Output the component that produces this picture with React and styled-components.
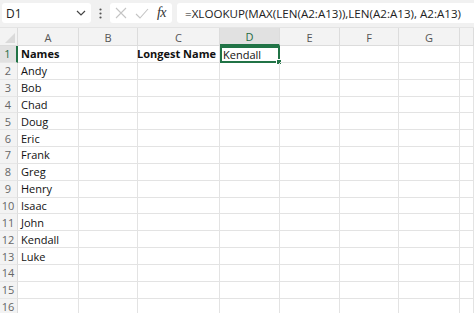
import React from 'react'
import styled, { createGlobalStyle } from 'styled-components'

const GlobalStyle = createGlobalStyle`
  html, body {
    margin: 0;
    padding: 0;
    background: #fff;
    overflow: hidden;
  }
  body {
    font-family: "Open Sans", "Noto Sans", sans-serif;
  }
`

const COLS = [
  { key: 'A', width: 61 },
  { key: 'B', width: 59 },
  { key: 'C', width: 82 },
  { key: 'D', width: 60 },
  { key: 'E', width: 60 },
  { key: 'F', width: 59 },
  { key: 'G', width: 61 },
  { key: 'H', width: 0, hidden: true },
]

const names = ['Andy', 'Bob', 'Chad', 'Doug', 'Eric', 'Frank', 'Greg', 'Henry', 'Isaac', 'John', 'Kendall', 'Luke']

const cellText = (row, col) => {
  if (row === 1 && col === 'A') return { text: 'Names', bold: true }
  if (row === 1 && col === 'C') return { text: 'Longest Name', bold: true, right: true }
  if (row === 1 && col === 'D') return { text: 'Kendall' }
  if (col === 'A' && row >= 2 && row <= 13) return { text: names[row - 2] }
  return null
}

const Page = styled.div`
  width: 474px;
  height: 313px;
  overflow: hidden;
  display: flex;
  flex-direction: column;
`

const TopBar = styled.div`
  height: 28px;
  background: #f1f1f1;
  display: flex;
  align-items: flex-start;
  padding-top: 3px;
  box-sizing: border-box;
  border-bottom: 1px solid #e4e4e4;
  flex-shrink: 0;
`

const NameBox = styled.div`
  width: 89px;
  height: 20px;
  margin-left: 2px;
  background: #fff;
  border-radius: 3px;
  display: flex;
  align-items: center;
  justify-content: space-between;
  padding: 0 5px 0 4px;
  box-sizing: border-box;
  font-size: 12px;
  color: #222;
`

const Dots = styled.div`
  width: 19px;
  display: flex;
  justify-content: center;
  align-items: center;
  height: 20px;
`

const FxGroup = styled.div`
  width: 62px;
  height: 20px;
  background: #fff;
  border-radius: 3px;
  display: flex;
  align-items: center;
  justify-content: space-between;
  padding: 0 6px 0 5px;
  box-sizing: border-box;
`

const Fx = styled.span`
  font-family: "Liberation Serif", "DejaVu Serif", serif;
  font-style: italic;
  font-size: 14px;
  color: #333;
  letter-spacing: -0.5px;
`

const FormulaBox = styled.div`
  flex: 1;
  height: 20px;
  margin-left: 5px;
  background: #fff;
  border-radius: 3px 0 0 3px;
  display: flex;
  align-items: center;
  padding-left: 8px;
  font-size: 11.6px;
  color: #222;
  white-space: nowrap;
  overflow: hidden;
`

const Sheet = styled.div`
  display: grid;
  grid-template-columns: 18px ${COLS.map(c => (c.width ? `${c.width}px` : '1fr')).join(' ')};
  grid-template-rows: 18px repeat(16, 16.85px);
  flex: 1;
`

const Corner = styled.div`
  background: #f3f3f3;
  border-right: 1px solid #dcdcdc;
  border-bottom: 1px solid #dcdcdc;
  box-sizing: border-box;
  position: relative;
  &::after {
    content: '';
    position: absolute;
    right: 2px;
    bottom: 2px;
    width: 0;
    height: 0;
    border-left: 10px solid transparent;
    border-bottom: 10px solid #dadada;
  }
`

const ColHead = styled.div`
  background: ${({ active }) => (active ? '#e1e1e1' : '#f3f3f3')};
  color: ${({ active }) => (active ? '#1f6b43' : '#555')};
  border-right: 1px solid #dcdcdc;
  border-bottom: ${({ active }) => (active ? '2px solid #217346' : '1px solid #dcdcdc')};
  box-sizing: border-box;
  font-size: 11px;
  display: flex;
  align-items: center;
  justify-content: center;
  padding-top: 1px;
`

const RowHead = styled.div`
  background: ${({ active }) => (active ? '#e1e1e1' : '#f3f3f3')};
  color: ${({ active }) => (active ? '#1f6b43' : '#666')};
  border-right: ${({ active }) => (active ? '2px solid #217346' : '1px solid #dcdcdc')};
  border-bottom: 1px solid #e6e6e6;
  box-sizing: border-box;
  font-size: 11px;
  display: flex;
  align-items: center;
  justify-content: center;
  padding-right: 1px;
`

const Cell = styled.div`
  border-right: 1px solid #e3e3e3;
  border-bottom: 1px solid #e3e3e3;
  box-sizing: border-box;
  font-size: 11px;
  font-weight: ${({ bold }) => (bold ? 700 : 400)};
  color: #111;
  display: flex;
  align-items: center;
  justify-content: ${({ right }) => (right ? 'flex-end' : 'flex-start')};
  padding: 0 3px;
  white-space: nowrap;
  position: relative;
  ${({ selected }) => selected && `
    border: 2px solid #217346;
    padding: 0 2px 0 1px;
    &::after {
      content: '';
      position: absolute;
      right: -4px;
      bottom: -4px;
      width: 4px;
      height: 4px;
      background: #217346;
      border: 1px solid #fff;
    }
  `}
`

const Chevron = () => (
  <svg width="10" height="6" viewBox="0 0 10 6">
    <path d="M1 1l4 4 4-4" fill="none" stroke="#444" strokeWidth="1.2" />
  </svg>
)

const VDots = () => (
  <svg width="3" height="11" viewBox="0 0 3 11">
    <circle cx="1.5" cy="1.5" r="1.1" fill="#555" />
    <circle cx="1.5" cy="5.5" r="1.1" fill="#555" />
    <circle cx="1.5" cy="9.5" r="1.1" fill="#555" />
  </svg>
)

const Cross = () => (
  <svg width="12" height="12" viewBox="0 0 12 12">
    <path d="M1 1l10 10M11 1L1 11" stroke="#c4c4c4" strokeWidth="1.1" />
  </svg>
)

const Tick = () => (
  <svg width="14" height="11" viewBox="0 0 14 11">
    <path d="M1 6l4 4 8-9" fill="none" stroke="#c4c4c4" strokeWidth="1.1" />
  </svg>
)

export default function App () {
  const rows = Array.from({ length: 16 }, (_, i) => i + 1)
  return (
    <Page>
      <GlobalStyle />
      <TopBar>
        <NameBox>
          <span>D1</span>
          <Chevron />
        </NameBox>
        <Dots><VDots /></Dots>
        <FxGroup>
          <Cross />
          <Tick />
          <Fx>fx</Fx>
        </FxGroup>
        <FormulaBox>=XLOOKUP(MAX(LEN(A2:A13)),LEN(A2:A13), A2:A13)</FormulaBox>
      </TopBar>
      <Sheet>
        <Corner />
        {COLS.map(c => (
          <ColHead key={c.key} active={c.key === 'D'}>{c.hidden ? '' : c.key}</ColHead>
        ))}
        {rows.map(r => (
          <React.Fragment key={r}>
            <RowHead active={r === 1}>{r}</RowHead>
            {COLS.map(c => {
              const v = cellText(r, c.key)
              return (
                <Cell
                  key={c.key}
                  bold={v && v.bold}
                  right={v && v.right}
                  selected={r === 1 && c.key === 'D'}
                >
                  {v ? v.text : ''}
                </Cell>
              )
            })}
          </React.Fragment>
        ))}
      </Sheet>
    </Page>
  )
}
